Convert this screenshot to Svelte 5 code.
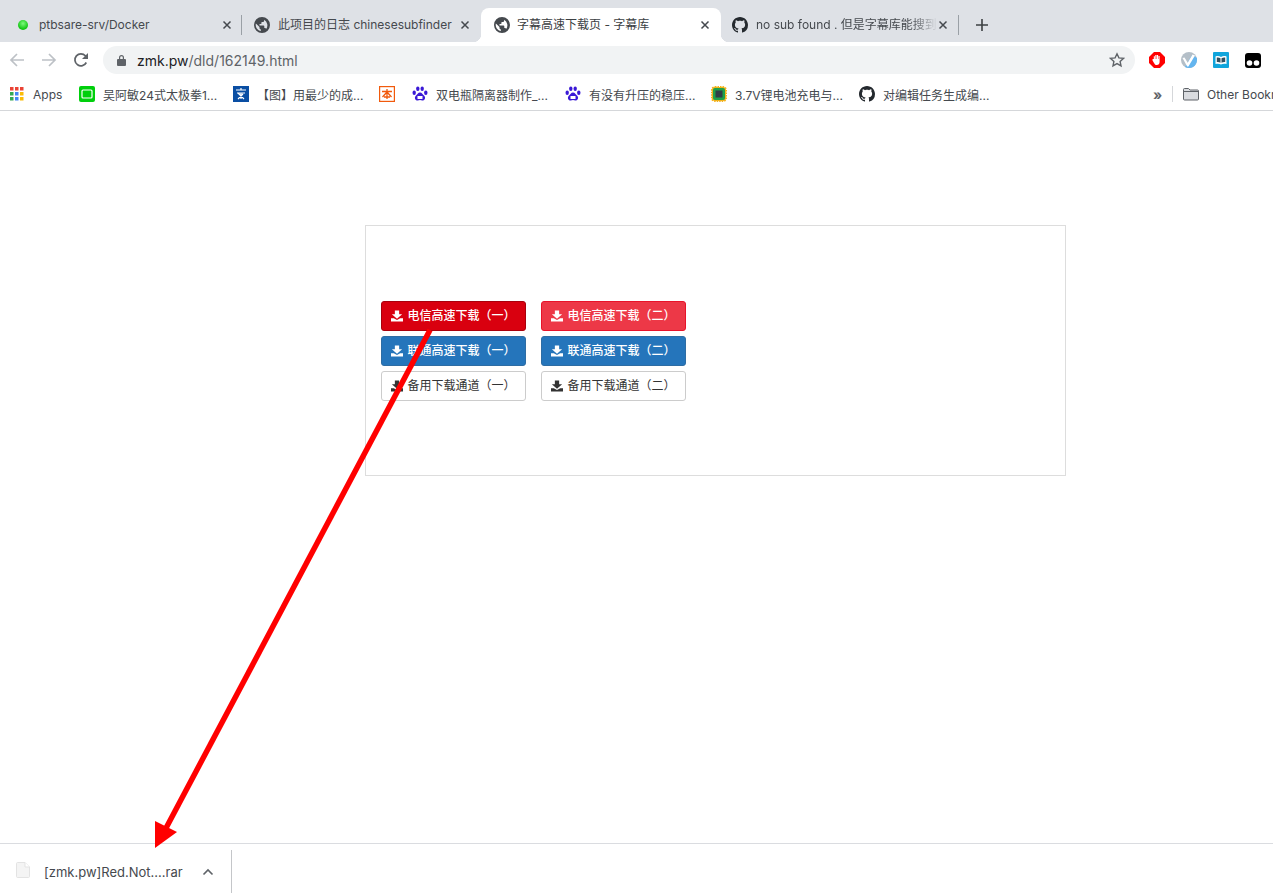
<script>
  const globe = 'M8 0a8 8 0 1 0 0 16A8 8 0 0 0 8 0Zm-1 14.200A6.300 6.300 0 0 1 1.900 6.500L5.500 10v1c0 .7.6 1.300 1.300 1.300v1.900Zm5.200-2.100c-.2-.6-.7-1-1.300-1h-.6V9.300c0-.4-.3-.7-.7-.7H5.500V7h1.300c.4 0 .7-.3.7-.7V5h1.300c.7 0 1.300-.6 1.300-1.300v-.9a6.300 6.300 0 0 1 2 9.300Z';
  const github = 'M8 0C3.580 0 0 3.580 0 8c0 3.540 2.290 6.530 5.470 7.590.4.070.55-.17.55-.38 0-.19-.01-.82-.01-1.490-2.010.37-2.530-.49-2.690-.94-.09-.23-.48-.94-.82-1.130-.28-.15-.68-.52-.01-.53.63-.01 1.080.58 1.230.82.720 1.210 1.870.870 2.330.660.070-.520.280-.870.510-1.070-1.780-.200-3.640-.890-3.640-3.950 0-.870.310-1.590.820-2.150-.080-.200-.360-1.020.080-2.120 0 0 .670-.210 2.200.820.640-.180 1.320-.270 2-.270s1.360.090 2 .270c1.530-1.040 2.200-.820 2.200-.820.440 1.100.160 1.920.080 2.120.510.560.820 1.270.820 2.150 0 3.070-1.870 3.750-3.650 3.950.290.250.540.730.540 1.480 0 1.070-.010 1.930-.010 2.200 0 .210.150.460.550.380A8.010 8.010 0 0 0 16 8c0-4.420-3.580-8-8-8Z';
  const dl = 'M4.500 0h5v4.500h3.500L7 9.700 1 4.500h3.500zM0 9h3.300L7 11.300 10.700 9H14v4H0z';

  const tabs = [
    { title: 'ptbsare-srv/Docker', icon: 'dot', cls: 'one' },
    { title: '此项目的日志 chinesesubfinder', icon: 'globe', cls: 'two' },
    { title: '字幕高速下载页 - 字幕库', icon: 'globe', cls: 'active' },
    { title: 'no sub found . 但是字幕库能搜到', icon: 'github', cls: 'four', fade: true }
  ];

  const bookmarks = [
    { title: '吴阿敏24式太极拳1...', icon: 'iqiyi', width: 154 },
    { title: '【图】用最少的成...', icon: 'jia', width: 146 },
    { title: '', icon: 'ben', width: 33 },
    { title: '双电瓶隔离器制作_...', icon: 'paw', width: 153 },
    { title: '有没有升压的稳压...', icon: 'paw', width: 146 },
    { title: '3.7V锂电池充电与...', icon: 'chip', width: 148 },
    { title: '对编辑任务生成编...', icon: 'github', width: 150 }
  ];

  const rows = [
    [{ label: '电信高速下载（一）', kind: 'red' }, { label: '电信高速下载（二）', kind: 'pink' }],
    [{ label: '联通高速下载（一）', kind: 'blue' }, { label: '联通高速下载（二）', kind: 'blue' }],
    [{ label: '备用下载通道（一）', kind: 'plain' }, { label: '备用下载通道（二）', kind: 'plain' }]
  ];
</script>

<div class="window">
  <div class="tabstrip">
    {#each tabs as tab}
      <div class="tab {tab.cls}">
        {#if tab.icon === 'dot'}
          <span class="dot"></span>
        {:else if tab.icon === 'globe'}
          <svg class="fav" viewBox="0 0 16 16"><path fill="#45494e" d={globe} /></svg>
        {:else}
          <svg class="fav" viewBox="0 0 16 16"><path fill="#24292e" d={github} /></svg>
        {/if}
        <span class="tabtitle" class:fade={tab.fade}>{tab.title}</span>
        <svg class="close" viewBox="0 0 10 10"><path d="M1.500 1.500l7 7M8.500 1.500l-7 7" stroke="#45494e" stroke-width="1.500" /></svg>
      </div>
    {/each}
    <svg class="plus" viewBox="0 0 12 12"><path d="M6 0v12M0 6h12" stroke="#3c4043" stroke-width="1.600" /></svg>
  </div>

  <div class="toolbar">
    <svg class="nav first" viewBox="0 0 16 16"><path d="M15 8H2M8 2 2 8l6 6" fill="none" stroke="#bdc1c6" stroke-width="1.700" /></svg>
    <svg class="nav" viewBox="0 0 16 16"><path d="M1 8h13M8 2l6 6-6 6" fill="none" stroke="#bdc1c6" stroke-width="1.700" /></svg>
    <svg class="nav" viewBox="0 0 16 16"><path d="M13.300 10.500A6 6 0 1 1 12.400 3.800L14.500 6" fill="none" stroke="#5f6368" stroke-width="1.700" /><path d="M15 1v6H9z" fill="#5f6368" /></svg>
    <div class="omnibox">
      <svg class="lock" viewBox="0 0 9 11"><path fill="#5f6368" d="M2 4V2.500a2.500 2.500 0 0 1 5 0V4h1a1 1 0 0 1 1 1v5a1 1 0 0 1-1 1H1a1 1 0 0 1-1-1V5a1 1 0 0 1 1-1h1Zm1.200 0h2.600V2.500a1.300 1.300 0 0 0-2.600 0V4Z" /></svg>
      <span class="url"><b>zmk.pw</b>/dld/162149.html</span>
      <svg class="star" viewBox="0 0 16 16"><path d="M8 1.800l1.900 4.100 4.500.5-3.300 3 .9 4.400L8 11.600l-4 2.200.9-4.400-3.300-3 4.500-.5z" fill="none" stroke="#5f6368" stroke-width="1.400" /></svg>
    </div>
    <div class="exts">
      <svg viewBox="0 0 16 16"><path fill="#f00" d="M5 0h6l5 5v6l-5 5H5l-5-5V5z" /><path fill="#fff" d="M4.800 7V4.300h1.100V7h.4V3h1.200v4h.4V3h1.200v4h.4V4h1.100v6c0 1.700-1.100 3-2.800 3-1.500 0-2.200-1-3.100-2.600L3.200 7.700l.9-.6z" /></svg>
      <svg viewBox="0 0 16 16"><circle cx="8" cy="8" r="8" fill="#b4bfc8" /><path fill="#64b5ef" d="M16 8a8 8 0 0 1-12 6.900L11 3l5 3z" /><path fill="#fff" d="M3.500 5.500l3.200 5.200 4.800-8.200 2.500 1-6.600 11h-1.200L1.500 6z" /></svg>
      <svg viewBox="0 0 16 16"><rect width="16" height="16" rx="1" fill="#10a5dc" /><path fill="#fff" d="M2.500 4.500C4.500 3.800 6.500 4 8 5c1.500-1 3.500-1.200 5.500-.5v7.500c-2-.6-4-.4-5.500.5-1.500-.9-3.500-1.100-5.500-.5z" /><path fill="#33505f" d="M3.800 5.500c1.300-.2 2.600 0 3.700.7v4.500c-1.100-.6-2.400-.8-3.700-.6zM12.200 5.500c-1.300-.2-2.600 0-3.700.7v4.500c1.100-.6 2.400-.8 3.700-.6z" /></svg>
      <svg viewBox="0 0 16 16"><path fill="#000" d="M3 1h10a3 3 0 0 1 3 3v9a3 3 0 0 1-3 3H3a3 3 0 0 1-3-3V4a3 3 0 0 1 3-3z" /><circle cx="4.500" cy="11" r="2.800" fill="#fff" /><circle cx="11.500" cy="11" r="2.800" fill="#fff" /></svg>
    </div>
  </div>

  <div class="bookmarks">
    <div class="bm apps">
      <svg class="bmicon" viewBox="0 0 14 14">
        {#each ['#ea4335', '#ea4335', '#ea4335', '#34a853', '#4285f4', '#fbbc05', '#34a853', '#4285f4', '#fbbc05'] as c, i}
          <rect x={(i % 3) * 5} y={Math.floor(i / 3) * 5} width="3.500" height="3.500" fill={c} />
        {/each}
      </svg>
      <span>Apps</span>
    </div>
    {#each bookmarks as b}
      <div class="bm" style="width: {b.width}px">
        {#if b.icon === 'iqiyi'}
          <svg class="bmicon" viewBox="0 0 16 16"><rect width="16" height="16" rx="2" fill="#00cf0c" /><rect x="3" y="4" width="10" height="8" rx="1" fill="none" stroke="#fff" stroke-width="1.200" /></svg>
        {:else if b.icon === 'jia'}
          <svg class="bmicon" viewBox="0 0 16 16"><rect width="16" height="16" fill="#0a4ea3" /><path d="M3 4h10M8 2v2M4 7h8M5 7l6 6M10 8l-5 5M8 7v6" fill="none" stroke="#fff" stroke-width="1.200" /></svg>
        {:else if b.icon === 'ben'}
          <svg class="bmicon" viewBox="0 0 16 16"><rect x=".6" y=".6" width="14.800" height="14.800" fill="#fff" stroke="#f15a0c" stroke-width="1.200" /><path d="M3 5.500h10M8 3v10M8 6l-4.500 5M8 6l4.500 5M5 11h6" fill="none" stroke="#f15a0c" stroke-width="1.300" /></svg>
        {:else if b.icon === 'paw'}
          <svg class="bmicon" viewBox="0 0 16 16"><g fill="#3a19d6"><ellipse cx="5.800" cy="2.800" rx="1.700" ry="2.300" /><ellipse cx="10.200" cy="2.800" rx="1.700" ry="2.300" /><ellipse cx="2.200" cy="6.800" rx="1.700" ry="2.200" /><ellipse cx="13.800" cy="6.800" rx="1.700" ry="2.200" /><path d="M8 6.500c2 0 2.700 2 4.200 3.200 1.700 1.500.8 4.800-1.800 4.800-1 0-1.700-.4-2.400-.4s-1.400.4-2.400.4c-2.600 0-3.500-3.300-1.800-4.800C5.300 8.500 6 6.500 8 6.500z" /></g><rect x="5.500" y="10" width="5" height="3" fill="#fff" /></svg>
        {:else if b.icon === 'chip'}
          <svg class="bmicon" viewBox="0 0 16 16"><rect x="1" y="1" width="14" height="14" rx="3" fill="#f2b21b" stroke="#f2b21b" stroke-width="2" stroke-dasharray="1.500 1" /><rect x="2" y="2" width="12" height="12" rx="2" fill="#1fa04a" /><rect x="4.500" y="4.500" width="7" height="7" fill="#2f3f46" /></svg>
        {:else}
          <svg class="bmicon" viewBox="0 0 16 16"><path fill="#24292e" d={github} /></svg>
        {/if}
        {#if b.title}<span>{b.title}</span>{/if}
      </div>
    {/each}
    <div class="bmright">
      <span class="chev">»</span>
      <i class="bmsep"></i>
      <svg class="folder" viewBox="0 0 16 14"><path d="M.5 2.500a1 1 0 0 1 1-1h4l1.500 1.500h7.500a1 1 0 0 1 1 1v8a1 1 0 0 1-1 1h-13a1 1 0 0 1-1-1z" fill="#dadce0" stroke="#5f6368" /><path d="M.5 4.500h15" stroke="#5f6368" /></svg>
      <span>Other Bookmarks</span>
    </div>
  </div>

  <main class="page">
    <section class="card">
      {#each rows as row}
        <div class="row">
          {#each row as btn}
            <button class="btn {btn.kind}">
              <svg class="dl" viewBox="0 0 14 13"><path fill="currentColor" d={dl} /></svg>{btn.label}
            </button>
          {/each}
        </div>
      {/each}
    </section>
  </main>

  <footer class="downloads">
    <div class="item">
      <svg class="file" viewBox="0 0 14 16"><path d="M1.500.5h7.500l4.500 4.500v9.500a1 1 0 0 1-1 1h-11a1 1 0 0 1-1-1v-13a1 1 0 0 1 1-1z" fill="#f4f4f4" stroke="#e3e3e3" /><path d="M9 .5V5h4.500" fill="#fff" stroke="#e3e3e3" /></svg>
      <span class="fname">[zmk.pw]Red.Not....rar</span>
      <svg class="caret" viewBox="0 0 12 8"><path d="M1.500 6.500 6 2l4.500 4.500" fill="none" stroke="#5f6368" stroke-width="1.600" /></svg>
    </div>
  </footer>

  <svg class="arrow" viewBox="0 0 1273 896" width="1273" height="896">
    <path d="M430 330 165 830" stroke="#ff0000" stroke-width="5.500" fill="none" />
    <path d="M155 848 155 821 177 832z" fill="#ff0000" />
  </svg>
</div>

<style>
  :global(body) {
    margin: 0;
    overflow: hidden;
    background: #fff;
  }
  .window {
    position: relative;
    width: 1273px;
    height: 896px;
    display: flex;
    flex-direction: column;
    overflow: hidden;
    font-family: Inter, "Noto Sans CJK SC", sans-serif;
    color: #3c4043;
  }
  .tabstrip {
    height: 34px;
    padding-top: 8px;
    background: #dee1e6;
    display: flex;
    align-items: stretch;
    flex-shrink: 0;
  }
  .tab {
    position: relative;
    display: flex;
    align-items: center;
    box-sizing: border-box;
    font-size: 12px;
    line-height: 32px;
    color: #45494e;
  }
  .one {
    width: 242px;
    padding: 0 10px 0 15px;
  }
  .two {
    width: 238px;
    padding: 0 10px 0 12px;
  }
  .four {
    width: 238px;
    padding: 0 11px;
  }
  .one::after,
  .four::after {
    content: '';
    position: absolute;
    right: 0;
    top: 7px;
    height: 20px;
    width: 1px;
    background: #9aa0a6;
  }
  .active {
    width: 240px;
    margin-left: 1px;
    padding: 0 11px 0 13px;
    background: #fff;
    border-radius: 8px 8px 0 0;
    color: #3c4043;
  }
  .active::before,
  .active::after {
    content: '';
    position: absolute;
    bottom: 0;
    width: 8px;
    height: 8px;
  }
  .active::before {
    left: -8px;
    background: radial-gradient(circle at 0 0, transparent 8px, #fff 8.5px);
  }
  .active::after {
    right: -8px;
    background: radial-gradient(circle at 100% 0, transparent 8px, #fff 8.5px);
  }
  .dot {
    width: 10px;
    height: 10px;
    margin: 0 3px;
    border-radius: 50%;
    background: radial-gradient(circle at 50% 35%, #7dfa7d, #0fc40f 70%);
    flex-shrink: 0;
  }
  .fav {
    width: 16px;
    height: 16px;
    flex-shrink: 0;
  }
  .tabtitle {
    margin-left: 8px;
    flex: 1;
    min-width: 0;
    white-space: nowrap;
    overflow: hidden;
  }
  .active .tabtitle {
    margin-left: 7px;
  }
  .fade {
    -webkit-mask-image: linear-gradient(to right, #000 85%, transparent);
    mask-image: linear-gradient(to right, #000 85%, transparent);
  }
  .close {
    width: 10px;
    height: 10px;
    flex-shrink: 0;
  }
  .plus {
    width: 12px;
    height: 12px;
    margin: 11px 0 0 17px;
  }
  .toolbar {
    height: 36px;
    display: flex;
    align-items: center;
    background: #fff;
    flex-shrink: 0;
  }
  .nav {
    width: 16px;
    height: 16px;
    margin-right: 16px;
  }
  .nav.first {
    margin-left: 9px;
  }
  .omnibox {
    width: 1032px;
    height: 28px;
    margin-left: -2px;
    box-sizing: border-box;
    padding: 0 10px 0 14px;
    border-radius: 14px;
    background: #f1f3f4;
    display: flex;
    align-items: center;
  }
  .lock {
    width: 9px;
    height: 11px;
  }
  .url {
    margin-left: 11px;
    flex: 1;
    font-size: 14px;
    color: #5f6368;
  }
  .url b {
    font-weight: 400;
    color: #202124;
  }
  .star {
    width: 16px;
    height: 16px;
  }
  .exts {
    display: flex;
    gap: 16px;
    margin-left: 14px;
  }
  .exts svg {
    width: 16px;
    height: 16px;
  }
  .bookmarks {
    height: 33px;
    box-sizing: border-box;
    border-bottom: 1px solid #d5d7da;
    display: flex;
    align-items: center;
    padding-left: 10px;
    font-size: 12px;
    color: #45494e;
    flex-shrink: 0;
    white-space: nowrap;
  }
  .bm {
    display: flex;
    align-items: center;
    flex-shrink: 0;
  }
  .apps {
    width: 69px;
  }
  .apps .bmicon {
    width: 14px;
    height: 14px;
    margin-right: 9px;
  }
  .bmicon {
    width: 16px;
    height: 16px;
    flex-shrink: 0;
    margin-right: 8px;
  }
  .bmright {
    display: flex;
    align-items: center;
    flex-shrink: 0;
    margin-left: 144px;
  }
  .chev {
    font-size: 14px;
    font-weight: 700;
    width: 10px;
    color: #5f6368;
  }
  .bmsep {
    width: 1px;
    height: 16px;
    background: #d5d7da;
    margin: 0 10px 0 9px;
  }
  .folder {
    width: 16px;
    height: 14px;
    margin-right: 8px;
  }
  .page {
    flex: 1;
    min-height: 0;
    padding: 114px 0 0 365px;
  }
  .card {
    width: 701px;
    height: 251px;
    box-sizing: border-box;
    border: 1px solid #ddd;
    padding: 75px 15px 0;
    display: flex;
    flex-direction: column;
    gap: 5px;
  }
  .row {
    display: flex;
    gap: 15px;
  }
  .btn {
    width: 145px;
    height: 30px;
    box-sizing: border-box;
    padding: 0;
    border: 1px solid;
    border-radius: 3px;
    display: flex;
    align-items: center;
    justify-content: center;
    font-family: inherit;
    font-size: 12px;
    font-weight: 500;
    line-height: 1.5;
  }
  .dl {
    width: 12px;
    height: 12px;
    margin-right: 4px;
  }
  .red {
    background: #d9000f;
    border-color: #a9000c;
    color: #fff;
  }
  .pink {
    background: #ed3847;
    border-color: #e8132a;
    color: #fff;
  }
  .blue {
    background: #2575bb;
    border-color: #2e6da4;
    color: #fff;
  }
  .plain {
    background: #fff;
    border-color: #ccc;
    color: #333;
    font-weight: 400;
  }
  .downloads {
    height: 53px;
    box-sizing: border-box;
    border-top: 1px solid #dadce0;
    padding: 6px 0 3px;
    flex-shrink: 0;
    display: flex;
  }
  .item {
    width: 232px;
    box-sizing: border-box;
    border-right: 1px solid #c4c6c9;
    display: flex;
    align-items: center;
    padding: 1px 17px 0 16px;
    font-size: 13px;
    color: #45494e;
  }
  .file {
    width: 14px;
    height: 16px;
    margin-bottom: 4px;
  }
  .fname {
    margin-left: 14px;
    flex: 1;
  }
  .caret {
    width: 12px;
    height: 8px;
  }
  .arrow {
    position: absolute;
    left: 0;
    top: 0;
    pointer-events: none;
  }
</style>
